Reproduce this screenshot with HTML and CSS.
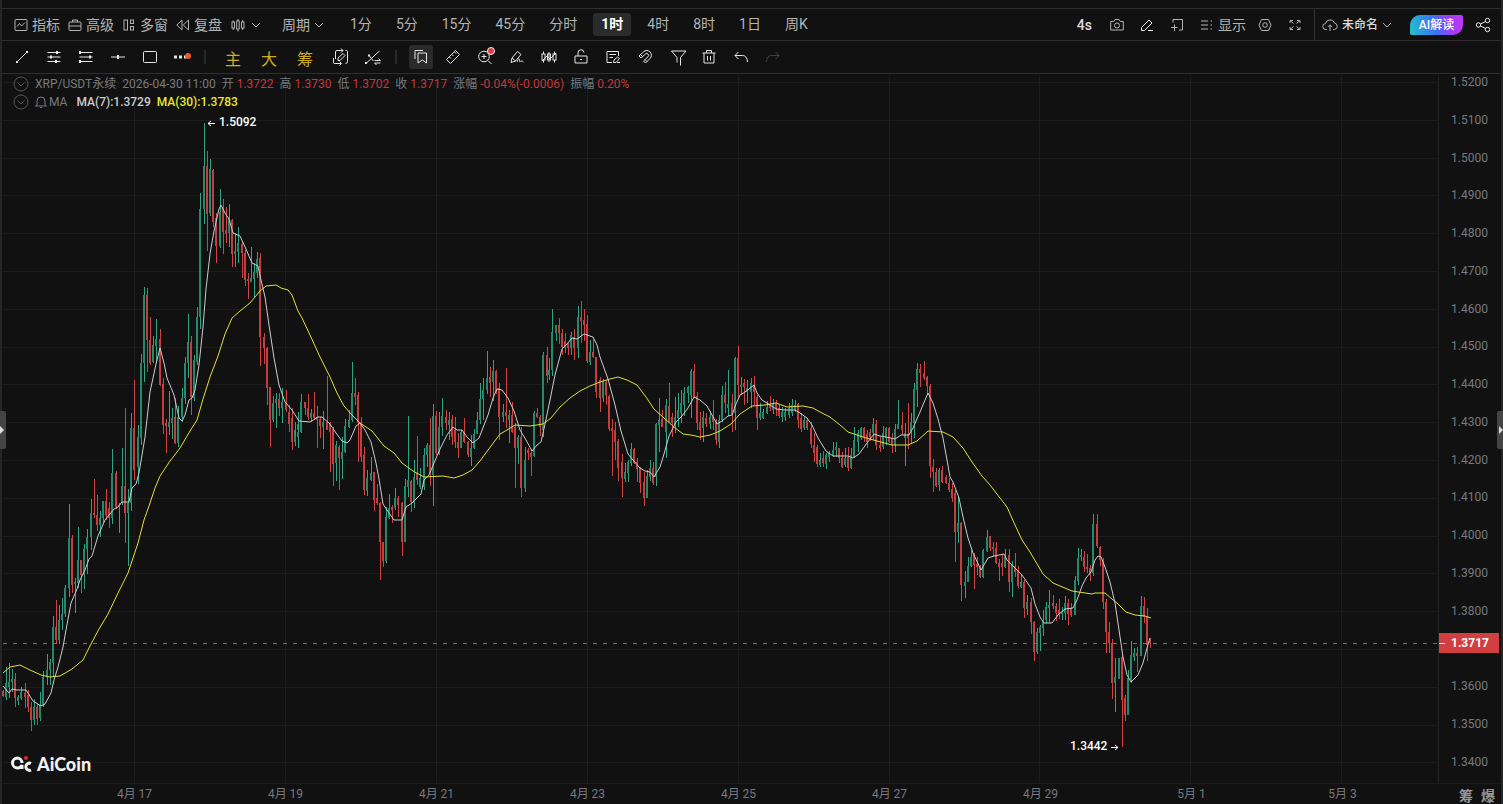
FILE: index.html
```html
<!DOCTYPE html>
<html lang="zh-CN">
<head>
<meta charset="utf-8">
<title>XRP/USDT永续 - AiCoin</title>
<link rel="stylesheet" href="styles.css">
</head>
<body>
<div class="app">
  <header class="bar">
    <nav class="tools">
      <button class="tool"><svg class="ic" viewBox="0 0 14 14"><rect x="1" y="1.500" width="12" height="11" rx="1"/><path d="M3 8.500 5.500 5.500 7.500 8 11 4.500"/></svg>指标</button>
      <button class="tool"><svg class="ic" viewBox="0 0 14 14"><rect x="1" y="4" width="12" height="8.500" rx="1"/><path d="M4.500 4V2H9.500V4M1 8H13"/></svg>高级</button>
      <button class="tool"><svg class="ic" viewBox="0 0 14 14"><rect x="2" y="2" width="3.500" height="10"/><rect x="8.500" y="2" width="3" height="3.500"/><rect x="8.500" y="8.500" width="3" height="3.500"/></svg>多窗</button>
      <button class="tool"><svg class="ic" viewBox="0 0 14 14"><path d="M6 2V12L.8 7ZM12.500 2V12L7.300 7Z"/></svg>复盘</button>
    </nav>
    <button class="tool candle-btn" aria-label="K线样式"><svg class="ic" viewBox="0 0 14 14"><rect x="1" y="4" width="2.500" height="6"/><rect x="5.700" y="3" width="2.500" height="8"/><rect x="10.500" y="4" width="2.500" height="6"/><path d="M2.200 2.500V4M2.200 10V12M7 1V3M7 11V13.500M11.700 2V4M11.700 10V12"/></svg><svg class="chev" viewBox="0 0 10 10"><path d="M1 3 5 7 9 3"/></svg></button>
    <button class="tool cycle-btn">周期<svg class="chev" viewBox="0 0 10 10"><path d="M1 3 5 7 9 3"/></svg></button>
    <nav class="periods">
      <button class="period">1分</button><button class="period">5分</button><button class="period">15分</button><button class="period">45分</button><button class="period">分时</button><button class="period on">1时</button><button class="period">4时</button><button class="period">8时</button><button class="period">1日</button><button class="period">周K</button>
    </nav>
    <div class="right">
      <span class="countdown">4s</span>
      <button class="tool" aria-label="截图"><svg class="ic" viewBox="0 0 14 14"><path d="M.7 3.500H3.800L5 1.500H9L10.200 3.500H13.300V12H.7Z"/><circle cx="7" cy="7.500" r="2.500"/></svg></button>
      <button class="tool lit" aria-label="画笔"><svg class="ic" viewBox="0 0 14 14"><path d="M1.500 12.500V9.500L9 2 12 5 4.500 12.500ZM8 12.500H13"/></svg></button>
      <button class="tool" aria-label="添加"><svg class="ic" viewBox="0 0 14 14"><path d="M3 4.500V1.500H12.500V12H9M1 9.500H7.500M4.500 6.500V13"/></svg></button>
      <button class="tool show"><svg class="ic" viewBox="0 0 14 14"><path d="M1 3H8M1 7H8M1 11H8M10.500 3H12M10.500 7H12M10.500 11H12"/></svg>显示</button>
      <button class="tool" aria-label="设置"><svg class="ic" viewBox="0 0 14 14"><path d="M3.500 1.500H10.500L13 7 10.500 12.500H3.500L1 7Z"/><circle cx="7" cy="7" r="2.300"/></svg></button>
      <button class="tool" aria-label="全屏"><svg class="ic" viewBox="0 0 14 14"><path d="M2 5V2.500H5M2 2.500 5.500 5.500M9 2.500H12V5M12 2.500 8.500 5.500M2 9V11.500H5M2 11.500 5.500 8.500M12 9V11.500H9M12 11.500 8.500 8.500"/></svg></button>
      <div class="account">
        <button class="tool name"><svg class="cloud" viewBox="0 0 16 14"><path d="M5 11.500H4A3 3 0 0 1 3.500 5.500 4.700 4.700 0 0 1 12.500 5 3.300 3.300 0 0 1 12.500 11.500H11M8 13V7M5.800 9 8 6.800 10.200 9"/></svg>未命名<svg class="chev" viewBox="0 0 10 10"><path d="M1 3 5 7 9 3"/></svg></button>
        <button class="ai">AI解读</button>
        <button class="tool lit" aria-label="分享"><svg class="share" viewBox="0 0 16 16"><circle cx="3.500" cy="8" r="2.200"/><circle cx="12.500" cy="3.500" r="2.200"/><circle cx="12.500" cy="12.500" r="2.200"/><path d="M5.500 7 10.500 4.500M5.500 9 10.500 11.500"/></svg></button>
      </div>
    </div>
  </header>

  <div class="bar draw">
    <button class="db" aria-label="线段"><svg viewBox="0 0 16 16"><path d="M3.500 12.500 12.500 3.500"/><path class="f" d="M2 12H4V14H2ZM12 2H14V4H12Z"/></svg></button>
    <button class="db" aria-label="平行线"><svg viewBox="0 0 16 16"><path d="M1.500 3.500H14.500M1.500 8H14.500M1.500 12.500H14.500"/><path class="f" d="M10 2H12V5H10ZM4 6.500H6V9.500H4ZM9 11H11V14H9Z"/></svg></button>
    <button class="db" aria-label="水平线"><svg viewBox="0 0 16 16"><path d="M1.500 3.500H14.500M1.500 8H14.500M1.500 12.500H14.500"/><path class="f" d="M1 2H3V5H1ZM11 6.500H13V9.500H11ZM1 11H3V14H1Z"/></svg></button>
    <button class="db" aria-label="射线"><svg viewBox="0 0 16 16"><path d="M1 8H15"/><path class="f" d="M7 6H9V10H7Z"/></svg></button>
    <button class="db" aria-label="矩形"><svg viewBox="0 0 16 16"><rect x="1.500" y="2.500" width="13" height="11" rx="1"/></svg></button>
    <button class="db" aria-label="更多"><svg viewBox="0 0 16 16"><path class="f" d="M0 6.500H3V9.500H0ZM5 6.500H8V9.500H5ZM10 6.500H12V9.500H10Z"/><circle class="hot" cx="14" cy="7" r="3"/></svg></button>
    <span class="sep"></span>
    <div class="marks"><button class="db mark">主</button><button class="db mark">大</button><button class="db mark">筹</button></div>
    <button class="db" aria-label="自动画线"><svg class="big" viewBox="0 0 18 18"><path d="M3.500 11V4A1.500 1.500 0 0 1 5 2.500H11M9 .5 11 2.500 9 4.500M13.500 2.500H14.500A1 1 0 0 1 15.500 3.500V13.500A2 2 0 0 1 13.500 15.500M1.500 10V14.500A1 1 0 0 0 2.500 15.500H9M7.500 13.500 9.500 15.500 7.500 17.500M6 12.500V10L11 5.500 13 7.500 8 12.500Z"/></svg></button>
    <button class="db" aria-label="切换线"><svg class="big" viewBox="0 0 18 18"><path d="M2.500 15 15.500 3M5 7.500 9.500 13M10.500 12.500H16.500L14.500 10.500M16.500 15H10.500L12.500 17"/><path class="f" d="M1 14H3V16H1ZM4 6.500H6V8.500H4Z"/></svg></button>
    <span class="sep"></span>
    <button class="db on" aria-label="收藏"><svg viewBox="0 0 16 16"><path d="M5 4H13.500V14L9.300 11 5 14ZM2 10V1.500H10"/></svg></button>
    <button class="db" aria-label="测量"><svg viewBox="0 0 16 16"><path d="M1.500 10.500 10.500 1.500 14.500 5.500 5.500 14.500ZM4.500 8 6 9.500M7 5.500 8.500 7M9.500 3 11 4.500"/></svg></button>
    <button class="db" aria-label="放大"><svg viewBox="0 0 16 16"><circle cx="7" cy="7.500" r="5.300"/><path d="M11 11.500 14.500 15M4.500 7.500H9.500M7 5V10"/><circle class="alert" cx="14" cy="2" r="3.500"/></svg></button>
    <button class="db" aria-label="画笔"><svg viewBox="0 0 16 16"><path d="M2 13.500 3 9 8.500 2.500 12 5.500 6.500 12ZM3 9 6.500 12M8 13C9 9 11 9 10.500 12 10.500 14 12 10.500 14.500 13"/></svg></button>
    <button class="db" aria-label="K线"><svg viewBox="0 0 16 16"><rect x="1" y="5" width="3" height="6"/><rect x="6.500" y="5" width="3" height="6"/><rect x="12" y="5" width="3" height="6"/><path d="M2.500 2.500V5M2.500 11V13.500M8 3V13M13.500 2.500V5M13.500 11V13.500M1 12 6 7 9 10 15 4"/></svg></button>
    <button class="db" aria-label="锁定"><svg viewBox="0 0 16 16"><path d="M2 7H14V14H2ZM5 7V4A3 3 0 0 1 11 3.500M7 10.500H9"/></svg></button>
    <button class="db" aria-label="备注"><svg viewBox="0 0 16 16"><path d="M7 13.500H2V2.500H13.500V7M4.500 5.500H11M4.500 8.500H8M8.500 13.500 9 11 12.500 8 14.500 9.500 11 13.500ZM12 13.500H15"/></svg></button>
    <button class="db" aria-label="磁铁"><svg viewBox="0 0 16 16"><path d="M2 7 6.500 2.800A4.500 4.500 0 0 1 13 9.500L8.500 14 6.500 12 11 7.800A1.700 1.700 0 0 0 8.500 5L4 9ZM3.500 5.500 5.500 7.500M8 10.500 10 12.500"/></svg></button>
    <button class="db" aria-label="筛选"><svg viewBox="0 0 16 16"><path d="M2.500 2H17L11.500 8.500V16.500M2.500 2 8 8.500V13.500"/></svg></button>
    <button class="db" aria-label="删除"><svg viewBox="0 0 16 16"><path d="M1.500 4H14.500M3 4V14H13V4M5.500 4V1.500H10.500V4M6.500 7V11.500M9.500 7V11.500"/></svg></button>
    <button class="db" aria-label="撤销"><svg viewBox="0 0 16 16"><path d="M5.500 3 2 6.500 5.500 10M2 6.500H9.500Q14 6.500 14.500 13"/></svg></button>
    <button class="db off" aria-label="重做"><svg viewBox="0 0 16 16"><path d="M10.500 3 14 6.500 10.500 10M14 6.500H6.500Q2 6.500 1.500 13"/></svg></button>
  </div>

  <main class="board">
    <section class="plot">
      <svg class="canvas" id="canvas" role="img" aria-label="XRP/USDT K线图"></svg>
      <div class="legend">
        <div class="line"><svg class="fold" viewBox="0 0 16 16"><circle cx="8" cy="8" r="7"/><path d="M4.500 6.500 8 10 11.500 6.500"/></svg><span>XRP/USDT永续</span><span>2026-04-30 11:00</span><span>开 <b>1.3722</b></span><span>高 <b>1.3730</b></span><span>低 <b>1.3702</b></span><span>收 <b>1.3717</b></span><span>涨幅 <b>-0.04%(-0.0006)</b></span><span>振幅 <b>0.20%</b></span></div>
        <div class="line"><svg class="fold" viewBox="0 0 16 16"><circle cx="8" cy="8" r="7"/><path d="M4.500 6.500 8 10 11.500 6.500"/></svg><span class="ma"><svg class="bell" viewBox="0 0 12 14"><path d="M2 10V6A4 4 0 0 1 10 6V10L11.500 11H.5ZM5 12.500H7"/></svg>MA</span><span class="ma7">MA(7):1.3729</span><span class="ma30">MA(30):1.3783</span></div>
      </div>
      <div class="logo"><svg viewBox="0 0 22 18"><path class="w" d="M6.500 3A5 5 0 1 0 6.500 13 5 5 0 0 0 11 10V14M11 8A5 5 0 0 0 6.500 3"/><path class="w" d="M20 8.500A3.600 3.600 0 1 0 20 15"/><circle class="red" cx="15" cy="3" r="2"/></svg>AiCoin</div>
    </section>
    <aside class="prices">
      <span>1.5200</span><span>1.5100</span><span>1.5000</span><span>1.4900</span><span>1.4800</span><span>1.4700</span><span>1.4600</span><span>1.4500</span><span>1.4400</span><span>1.4300</span><span>1.4200</span><span>1.4100</span><span>1.4000</span><span>1.3900</span><span>1.3800</span><span></span><span>1.3600</span><span>1.3500</span><span>1.3400</span>
      <strong class="tag">1.3717</strong>
    </aside>
    <footer class="dates"><span>4月 17</span><span>4月 19</span><span>4月 21</span><span>4月 23</span><span>4月 25</span><span>4月 27</span><span>4月 29</span><span>5月 1</span><span>5月 3</span></footer>
    <div class="modes"><button>筹</button><button>爆</button></div>
  </main>
  <button class="handle left" aria-label="展开左侧"><svg viewBox="0 0 6 10"><path d="M0 1 4 5 0 9Z"/></svg></button>
  <button class="handle rightside" aria-label="展开右侧"><svg viewBox="0 0 6 10"><path d="M2 1 6 5 2 9Z"/></svg></button>
</div>
<script src="chart.js"></script>
</body>
</html>
```
FILE: styles.css
```css
* { box-sizing: border-box; }
body { margin: 0; background: #111; color: #b4b4b4; font: 12px/16px Roboto, "Noto Sans CJK SC", sans-serif; }
button { margin: 0; padding: 0; border: 0; background: none; color: inherit; font: inherit; cursor: pointer; }
svg { display: block; flex: none; fill: none; stroke: currentColor; }
.app { position: relative; display: flex; flex-direction: column; min-height: 100vh; padding-top: 8px; border-left: 2px solid #262626; border-right: 2px solid #262626; }
.bar { display: flex; align-items: center; height: 32px; padding-left: 12px; border-top: 1px solid #2e2e2e; white-space: nowrap; }
.tools { display: flex; gap: 8px; }
.tool { display: flex; align-items: center; gap: 4px; font-size: 14px; line-height: 20px; }
.ic { width: 14px; height: 14px; }
.chev { width: 10px; height: 10px; }
.candle-btn { margin-left: 9px; gap: 6px; }
.cycle-btn { margin-left: 21px; gap: 4px; }
.periods { display: flex; gap: 8px; margin-left: 18px; }
.period { padding: 0 8px; height: 23px; border-radius: 3px; font-size: 14px; line-height: 23px; }
.period.on { background: #2b2b2b; color: #fff; font-weight: 700; }
.right { display: flex; align-items: center; gap: 16px; margin-left: auto; height: 100%; }
.countdown { margin-right: 2px; color: #dcdcdc; font-size: 14px; font-weight: 500; }
.lit { color: #eee; }
.show { margin-right: -4px; }
.account { display: flex; align-items: center; height: 100%; margin-left: -4px; padding: 0 10px 0 7px; border-left: 1px solid #333; gap: 12px; }
.name { color: #ddd; font-size: 12px; font-weight: 500; }
.name .chev, .cloud { color: #b4b4b4; }
.cloud { width: 16px; height: 14px; }
.ai { width: 53px; height: 20px; margin-left: 6px; border-radius: 10px 2px 10px 2px; background: linear-gradient(75deg, #20c5c9, #3973f5 45%, #a43cf4 75%, #c038f0); color: #fff; font-size: 12px; font-weight: 500; line-height: 20px; }
.share { width: 16px; height: 16px; }

.draw { height: 34px; padding-left: 8px; gap: 8px; border-bottom: 1px solid #2e2e2e; }
.db { display: grid; place-items: center; width: 24px; height: 24px; border-radius: 3px; color: #e6e6e6; }
.db svg { width: 16px; height: 16px; overflow: visible; }
.db .big { width: 18px; height: 18px; }
.db.on { background: #2b2b2b; }
.db.off { color: #444; }
.db .f { fill: currentColor; stroke: none; }
.db .hot { fill: #f05a28; stroke: none; }
.db .alert { fill: #e03a3e; stroke: #eee; }
.sep { width: 2px; height: 14px; margin-left: 2px; background: #292929; }
.sep + .on { margin-left: 4px; }
.marks { display: flex; gap: 12px; margin: 0 4px 0 7px; }
.mark { color: #cfaf1e; font-size: 16px; line-height: 24px; padding-top: 3px; }

.board { flex: 1; display: grid; grid-template-columns: 1fr 62px; grid-template-rows: 1fr 21px; color: #777a80; }
.plot { position: relative; min-height: 300px; overflow: hidden; }
.canvas { position: absolute; inset: 0; width: 100%; height: 100%; stroke: none; }
.legend { position: relative; padding: 1px 0 0 11px; }
.line { display: flex; align-items: center; gap: 6px; height: 18px; }
.line b { color: #c2383d; font-weight: 400; }
.fold { width: 16px; height: 16px; color: #555; }
.ma { display: flex; align-items: center; gap: 2px; margin-right: 3px; }
.bell { width: 12px; height: 14px; }
.ma7 { color: #ccc; font-weight: 500; }
.ma30 { color: #e8e82a; font-weight: 500; }
.logo { position: absolute; left: 9px; bottom: 8px; display: flex; align-items: center; gap: 4px; color: #f2f2f2; font: 900 18px/22px Lato, sans-serif; }
.logo svg { width: 22px; height: 18px; }
.logo .w { stroke-width: 3; }
.logo .red { fill: #e02a25; stroke: none; }
.prices { position: relative; display: flex; flex-direction: column; justify-content: space-between; padding: 0 0 13px 12px; }
.prices span { height: 16px; }
.tag { position: absolute; left: 0; right: 2px; top: 559px; padding-left: 12px; background: #d23f40; color: #fff; font-weight: 700; line-height: 20px; }
.tag::before { content: ""; position: absolute; left: 0; top: 10px; width: 6px; height: 1px; background: #fff; }
.dates { display: flex; padding-left: 57px; line-height: 20px; border-top: 1px solid #1c1c1c; }
.dates span { flex: 0 0 151px; text-align: center; }
.modes { display: flex; justify-content: flex-end; gap: 8px; padding: 4px 6px 0 0; height: 21px; color: #999; font-size: 14px; font-weight: 700; line-height: 16px; border-top: 1px solid #1c1c1c; }
.handle { position: absolute; top: 411px; width: 6px; height: 38px; background: #444; color: #ddd; display: grid; place-items: center; }
.handle svg { width: 6px; height: 10px; fill: currentColor; stroke: none; }
.handle.left { left: -2px; border-radius: 0 2px 2px 0; }
.handle.rightside { right: -2px; border-radius: 2px 0 0 2px; }
.ann { fill: #fff; font-weight: 500; }
```
FILE: chart.js
```js
// Each run: first x, then candles as "high top bottom low" with an r (down) or g (up) prefix.
const runs = [
  [3, "r690 691 696 697,g667 683 697 700,g663 682 687 698,g669 679 682 692,r673 679 698 707,g695 697 701 705,g687 692 698 700,r683 693 697 708,r690 695 707 712,r702 707 720 731,g699 707 720 725,r703 707 719 725,g692 705 718 721,g671 677 705 707,g654 670 677 685,g659 662 670 685,g616 627 663 677,r600 627 640 644,g605 620 640 644,g598 614 620 630,g585 588 614 617,g504 538 588 597,r535 538 585 593,g578 582 584 613,g527 560 583 588,r560 560 575 593,g544 549 575 589,g529 537 549 574,g499 513 537 550,r479 513 515 518,r495 515 525 531,g511 518 525 537"],
  [103.5, "g501 501 518 523,r489 501 515 520,r502 508 518 528,g449 473 518 524,r471 473 507 509,g503 505 507 533,g448 486 503 505,r408 486 513 543,g489 503 513 566,g413 428 503 511,r380 428 470 480,g425 437 467 484,g354 363 438 445,g287 295 363 382,r288 295 340 372,r317 340 363 365,g336 345 362 363,g319 339 346 363,r329 339 385 386,r378 384 425 434,r419 423 426 453,g391 422 427 435,g408 418 423 439,r398 417 443 444,g406 417 443 447,g388 398 417 422,g357 363 398 404,g314 342 363 378,r336 342 397 415,g355 360 398 401,g307 317 362 365,g193 209 317 329"],
  [204.3, "g123 166 209 224,r151 166 214 251,g159 169 213 216,r169 170 222 227,r213 218 246 263,g189 212 246 248,r199 207 232 254,r207 230 234 243,g204 219 233 247,r219 220 254 267,g233 251 254 267,g227 243 252 263,r242 244 253 278,r250 253 280 286,r273 279 281 299,g247 278 282 282,g263 272 279 297,g252 259 273 278,r253 258 337 366,r333 337 348 364,r347 348 388 405,r387 387 420 447,g396 403 420 422,g393 399 403 428,r393 399 408 416,g388 402 408 423,r390 402 410 412,r405 412 420 421,r408 418 437 438,g428 430 437 446,g412 424 430 440"],
  [289.3, "r410 412 424 432,r408 423 442 450,g422 436 442 443,g424 432 437 448,g394 402 432 433,r402 402 408 415,r394 408 417 420,g409 413 418 422,r392 413 418 420,r406 417 420 448,r417 419 426 438,g411 422 427 449,r376 422 430 430,r422 423 432 472,r427 429 464 486,g441 445 463 481,r445 447 458 490,g437 452 459 479,g419 426 452 453,g410 420 427 428,g362 393 420 422,r378 393 397 405,r392 395 423 462,r417 422 457 462,r447 455 490 495,g470 478 491 496,g457 473 480 481,r472 472 500 511,r484 498 503 505,r502 503 542 580,r542 542 561 567,g507 517 561 563"],
  [389.5, "g494 508 518 519,r505 507 510 523,g488 498 508 510,r496 498 505 517,r502 503 542 556,g479 486 542 542,g416 480 487 497,r480 481 502 512,g460 477 503 508,r436 473 480 485,g468 478 487 489,g448 455 487 490,g443 445 455 467,r418 445 473 486,g404 416 475 506,r411 416 453 455,g412 427 454 455,g398 416 427 436,r410 417 423 430,g412 420 425 440,r415 419 437 445,r417 430 442 448,r433 442 448 458,g430 432 448 448,r418 432 442 443,r441 442 455 457,g435 448 457 466,g429 434 448 449,g412 420 434 434,g383 399 420 424,g378 390 399 420"],
  [487.3, "g351 378 390 394,r367 377 383 397,g360 371 382 401,r370 371 393 394,r383 388 417 440,g404 412 417 422,r368 412 416 428,g410 415 420 443,r402 415 432 433,r423 427 448 488,g435 437 448 464,r427 437 488 497,g447 460 488 492,r448 450 453 460,r449 453 457 476,g411 413 456 457,r408 413 417 418,r415 417 427 436,g352 355 430 437,r347 355 376 383"],
  [549.8, "g358 370 375 380,g309 332 370 376,g325 325 333 341,r318 325 333 344,r329 333 347 355,r333 341 348 353,r343 344 348 355,g332 335 348 355,r329 337 348 360,g306 317 348 358,r301 317 321 343,r309 320 325 341,r315 324 361 363,g340 352 362 365,r338 352 357 358,r357 357 392 398,r377 380 398 412,g379 382 398 402,r380 382 395 405,r395 396 429 431,r419 428 431 476,r422 430 442 460,r439 441 468 481,r454 462 478 497,g463 472 479 482,g460 462 473 482,g443 449 463 466,r448 449 463 464,r458 462 469 482,r467 468 483 493,r472 482 498 506,g470 476 498 498"],
  [650.3, "g460 468 477 481,r462 468 483 485,g423 424 477 486,g398 420 425 452,r410 419 427 427,g399 405 432 458,r383 406 422 423,r413 417 423 437,g397 417 425 433,g393 410 418 427,g390 403 413 423,g387 393 405 416,g386 387 393 403,g369 371 395 418,r364 371 397 398,r392 396 423 430,r412 422 430 440,g411 417 428 442,r413 418 424 427,g411 417 424 429,r400 417 422 430,r419 421 440 445,g415 420 442 448,g386 395 420 422,r382 395 403 413,g370 404 408 416,r394 403 414 432,g357 358 413 430,r346 358 385 398,g377 385 387 395,r379 383 387 405,g380 388 392 403"],
  [751.3, "g378 383 392 408,r376 385 392 405,r395 397 418 430,g403 413 418 420,g409 412 418 419,g401 407 413 414,r396 405 408 411,g399 404 410 414,r400 403 408 416,r405 408 416 418,g407 412 417 422,g408 412 417 421,g403 408 415 418,g399 405 413 416,g400 405 410 412,r403 404 420 428,r413 418 429 432,g416 420 428 430,r418 420 428 430,r422 428 444 448,r433 445 453 462,r445 447 464 467,g453 460 465 467,r451 458 463 467,g453 455 464 469,g451 453 457 462,g442 450 455 457,g442 447 450 457,r448 448 458 463,r452 458 467 468,g448 458 465 467,r447 457 468 471"],
  [851.8, "g448 455 468 469,g427 440 457 458,g430 433 442 452,g427 428 438 440,r427 428 438 442,r430 434 442 448,r429 432 437 441,g418 424 433 440,r420 424 445 450,r437 445 448 452,g426 433 447 449,g427 428 438 445,r427 428 442 443,r433 438 445 453,g424 429 445 452,g400 424 429 429,r412 425 430 435,g423 433 438 466,r403 434 438 449,g413 422 433 443,g383 389 423 438,g363 369 390 407,r364 369 373 387,r361 373 378 380,r376 377 386 395,r384 386 466 478,r459 467 472 492,r468 472 486 487,g468 470 485 491,r466 470 482 483,r475 477 483 484,r478 483 490 492"],
  [952.5, "r483 489 498 502,r490 493 532 562,g497 523 532 543,r522 523 585 601,g571 582 586 598,g557 566 582 582,g550 557 566 567,r553 555 565 589,r557 564 567 575,r565 566 577 578,g549 550 577 578,g530 537 551 552,r536 536 548 551,r542 547 549 557,r542 548 563 564,r559 563 567 581,r554 563 567 576,g549 557 567 568,r549 555 582 592,g561 565 582 597,r553 566 572 577,r566 570 586 588,g575 582 587 588,r580 582 608 618,g595 602 609 615,r598 602 622 634,r621 622 652 661"],
  [1037.3, "g628 632 652 654,g625 627 633 651,g610 620 628 636,g602 607 620 623,g590 605 608 623,r595 603 606 609,r603 606 613 621,r599 610 614 619,g607 612 614 620,g596 603 613 620,r599 603 614 625,r603 608 615 617,g576 580 615 615,g548 558 581 585,g549 555 557 561,r551 557 567 572,r554 567 569 573,r565 568 575 581,g514 524 573 576,r514 524 546 548,r546 547 560 566,r558 560 602 609,r599 602 632 653,r622 632 643 653,r639 643 683 699,g658 677 683 712,g658 658 679 679,r653 657 700 747,r695 698 715 721,g670 678 715 715,g641 655 680 683,g648 653 657 661,r647 653 656 672,g596 606 656 656,r597 606 617 623,r608 617 645 661,r638 641 643 648"]
];
const ma30 = "3,673 10,667 20,665 30,670 41,675 50,677 60,676 72,669 83,660 91,644 99,629 108,614 118,593 128,573 138,543 144,520 149,506 155,488 160,476 170,461 180,448 190,431 197,420 203,399 210,377 218,356 225,334 232,318 240,311 250,303 260,291 266,286 276,285 281,288 288,290 292,295 298,311 302,318 310,335 320,357 330,377 337,393 344,406 352,415 360,423 372,431 384,446 394,453 402,463 413,471 424,477 443,476 454,478 463,475 472,470 480,461 488,450 500,434 507,430 515,425 530,426 543,424 551,418 560,407 570,398 580,391 590,386 600,382 610,379 618,377 627,380 637,385 646,397 654,409 664,418 674,427 683,434 691,435 700,437 710,435 720,431 731,424 740,414 752,406 765,405 776,403 787,407 803,406 813,408 820,412 830,417 840,425 848,432 863,437 877,441 892,445 908,445 917,441 928,431 943,432 953,437 963,448 972,462 982,476 990,485 1000,498 1007,507 1015,525 1022,540 1030,552 1043,574 1053,583 1072,591 1092,594 1095,593 1105,593 1112,599 1117,603 1126,612 1135,615 1145,616 1151,618";
const ma7 = "3,686 9,693 12,689 17,690 26,690 33,701 41,706 45,704 51,693 54,680 58,667 63,647 66,630 71,603 77,589 80,580 85,570 89,559 92,556 98,536 105,520 114,509 118,507 122,502 129,502 132,488 136,484 139,473 142,455 145,437 150,392 156,364 160,348 164,363 167,378 174,395 179,418 182,421 185,415 189,400 192,398 195,390 199,365 203,327 206,289 210,254 214,231 219,209 221,205 225,213 229,219 233,233 240,236 246,249 252,263 258,266 261,280 265,297 269,325 274,358 279,385 285,402 292,410 299,421 310,422 318,417 322,417 330,424 336,433 342,441 347,443 350,440 356,426 360,423 365,430 371,442 376,463 379,479 383,504 387,510 394,520 402,520 406,507 412,503 421,494 424,480 429,475 434,463 440,449 447,435 453,427 457,430 462,430 467,437 473,443 479,438 488,415 493,398 497,389 502,390 508,398 514,411 520,430 526,440 532,451 537,445 541,442 545,424 550,400 555,375 562,349 567,344 572,338 577,339 584,334 593,337 597,345 600,357 608,379 615,405 621,431 628,454 633,460 640,468 645,471 650,472 654,477 660,467 664,454 669,436 676,422 682,416 688,408 694,397 700,400 707,406 712,415 717,424 722,421 728,416 732,415 736,404 740,395 745,392 749,389 754,385 757,393 762,400 770,405 776,409 785,410 795,410 800,413 807,418 812,425 818,438 826,451 833,456 848,456 853,458 859,454 867,443 874,434 880,436 886,437 895,439 901,435 909,435 913,428 920,412 928,393 933,403 938,419 943,438 947,460 950,477 953,482 959,498 963,517 968,538 973,553 981,570 988,558 994,556 1004,554 1007,560 1013,566 1022,575 1031,588 1035,604 1040,617 1044,623 1052,623 1058,615 1065,609 1073,608 1077,600 1082,586 1086,578 1091,572 1095,560 1098,556 1101,557 1105,567 1110,582 1115,603 1119,630 1123,657 1127,675 1131,682 1138,675 1143,663 1147,648 1150,638";
const step = 3.143;
let out = "";
for (let i = 0; i < 19; i++) out += `<rect x="0" y="${Math.round(82 + i * 37.8)}" width="4000" height="1" fill="#1b1b1b"/>`;
for (let i = 0; i < 9; i++) out += `<rect x="${Math.round(134 + i * 150.9)}" y="76" width="1" height="4000" fill="#1d1d1d"/>`;
for (const [start, data] of runs) {
  data.split(",").forEach((item, i) => {
    const [hi, top, bottom, lo] = item.slice(1).split(" ").map(Number);
    const x = Math.floor(start + i * step);
    const up = item[0] === "g";
    out += `<rect x="${x}" y="${hi}" width="1" height="${lo - hi}" fill="${up ? "#2fa583" : "#d04442"}"/>`;
    out += `<rect x="${x - 1}" y="${top}" width="2" height="${Math.max(1, bottom - top)}" fill="${up ? "#26886b" : "#c43e3f"}"/>`;
  });
}
out += `<path d="M3 643.5H4000" stroke="#d2405c" stroke-dasharray="4 6"/>`;
out += `<polyline points="${ma30}" stroke="#e0e038" fill="none"/><polyline points="${ma7}" stroke="#cccccc" fill="none"/>`;
out += `<text class="ann" x="219" y="126">1.5092</text><path d="M215 123.500H208M211 121 208 123.500 211 126" stroke="#fff" fill="none"/>`;
out += `<text class="ann" x="1070" y="750">1.3442</text><path d="M1111 747.500H1118M1115 745 1118 747.500 1115 750" stroke="#fff" fill="none"/>`;
document.getElementById("canvas").innerHTML = `<g transform="translate(-2 -74)">${out}</g><rect x="100%" y="2" width="1" height="100%" fill="#222" transform="translate(-1 0)"/>`;
```
